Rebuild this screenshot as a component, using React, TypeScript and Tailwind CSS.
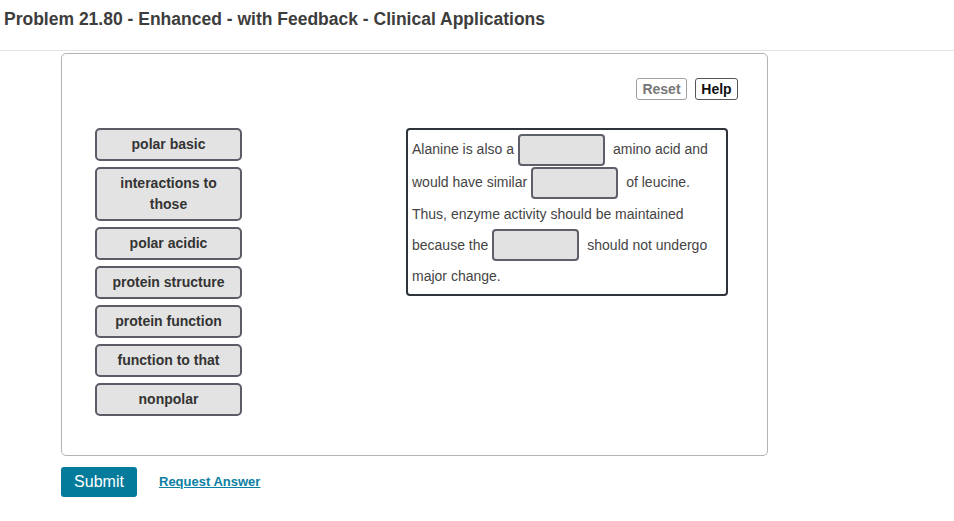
import React from 'react';

const tokens = [
  { label: 'polar basic', lines: 1 },
  { label: 'interactions to those', lines: 2 },
  { label: 'polar acidic', lines: 1 },
  { label: 'protein structure', lines: 1 },
  { label: 'protein function', lines: 1 },
  { label: 'function to that', lines: 1 },
  { label: 'nonpolar', lines: 1 },
];

const Blank: React.FC = () => (
  <span className="inline-block w-[87px] h-[32px] ml-[4px] mr-[8px] bg-[#e2e2e2] border-2 border-[#5f5f6b] rounded-[4px]" />
);

const App: React.FC = () => {
  return (
    <div className="w-[954px] h-[521px] bg-white font-['Liberation_Sans',Arial,sans-serif] text-[#333]">
      {/* header */}
      <div className="h-[51px] border-b border-[#e4e4e4] pl-[4px] pt-[8px]">
        <h1 className="text-[17.5px] font-bold text-[#3d3d3d] leading-[22px]">
          Problem 21.80 - Enhanced - with Feedback - Clinical Applications
        </h1>
      </div>

      {/* panel */}
      <div className="ml-[61px] mt-[2px] w-[707px] h-[403px] border border-[#b3b3b3] rounded-[5px] pt-[24px]">
        <div className="flex justify-end gap-[8px] pr-[29px]">
          <button className="w-[51px] h-[22px] border border-[#a0a0a0] rounded-[3px] text-[14px] font-bold text-[#777] leading-none">
            Reset
          </button>
          <button className="w-[43px] h-[22px] border border-[#555] rounded-[3px] text-[14px] font-bold text-[#111] leading-none">
            Help
          </button>
        </div>

        <div className="flex items-start pl-[33px] mt-[28px]">
          <div className="flex flex-col gap-[6px] w-[147px]">
            {tokens.map(t => (
              <div
                key={t.label}
                className={`border-2 border-[#5c5c68] rounded-[5px] bg-[#e3e3e3] text-center text-[14px] font-bold text-[#333] leading-[21px] py-[4px] px-[14px] ${t.lines === 2 ? 'h-[54px]' : 'h-[33px]'}`}
              >
                {t.label}
              </div>
            ))}
          </div>

          <div className="ml-[164px] w-[322px] h-[168px] border-2 border-[#2f343a] rounded-[4px] pt-[3px] pl-[4px] text-[14px] text-[#444]">
            <div className="flex items-center h-[33px]">
              <span>Alanine is also a</span>
              <Blank />
              <span>amino acid and</span>
            </div>
            <div className="flex items-center h-[33px]">
              <span>would have similar</span>
              <Blank />
              <span>of leucine.</span>
            </div>
            <div className="flex items-center h-[30px]">
              <span>Thus, enzyme activity should be maintained</span>
            </div>
            <div className="flex items-center h-[32px]">
              <span>because the</span>
              <Blank />
              <span>should not undergo</span>
            </div>
            <div className="flex items-center h-[30px]">
              <span>major change.</span>
            </div>
          </div>
        </div>
      </div>

      {/* actions */}
      <div className="flex items-center ml-[61px] mt-[11px] gap-[22px]">
        <button className="w-[76px] h-[30px] bg-[#047b9b] rounded-[3px] text-white text-[16px]">
          Submit
        </button>
        <a href="#" className="text-[13px] font-bold text-[#0a7fa3] underline">
          Request Answer
        </a>
      </div>
    </div>
  );
};

export default App;
